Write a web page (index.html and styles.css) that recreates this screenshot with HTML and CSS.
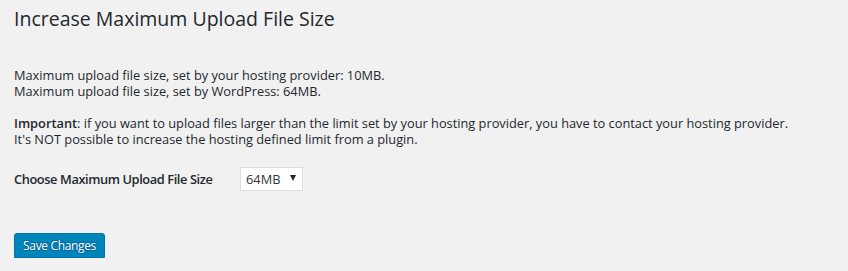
FILE: index.html
```html
<!DOCTYPE html>
<html>
<head>
<meta charset="utf-8">
<link rel="stylesheet" href="styles.css">
</head>
<body>
<div class="wrap">
  <h1 class="title">Increase Maximum Upload File Size</h1>
  <p class="info">Maximum upload file size, set by your hosting provider: 10MB.<br>Maximum upload file size, set by WordPress: 64MB.</p>
  <p class="note"><strong>Important</strong>: if you want to upload files larger than the limit set by your hosting provider, you have to contact your hosting provider.<br>It's NOT possible to increase the hosting defined limit from a plugin.</p>
  <div class="field">
    <label class="field-label">Choose Maximum Upload File Size</label>
    <div class="select"><span class="select-value">64MB</span><span class="select-arrow"></span></div>
  </div>
  <div class="actions">
    <button class="button-primary">Save Changes</button>
  </div>
</div>
</body>
</html>
```

FILE: styles.css
```css
html, body {
  margin: 0;
  padding: 0;
  background: #f1f1f1;
}
body {
  color: #23282d;
  font-family: "Open Sans", sans-serif;
  font-size: 12.8px;
}
.wrap {
  padding: 0 14px;
}
.title {
  margin: 0;
  padding-top: 4px;
  font-size: 19.5px;
  font-weight: 400;
  line-height: 29px;
  color: #23282d;
}
.info {
  margin: 34px 0 0;
  line-height: 16px;
}
.note {
  margin: 16px 0 0;
  line-height: 16px;
}
.note strong {
  font-weight: 600;
}
.field {
  margin-top: 20px;
  display: flex;
  align-items: center;
  height: 24px;
}
.field-label {
  width: 226px;
  font-weight: 600;
  line-height: 16px;
  letter-spacing: -0.4px;
}
.select {
  box-sizing: border-box;
  width: 63px;
  height: 24px;
  background: #fff;
  border: 1px solid #ddd;
  display: flex;
  align-items: center;
  justify-content: space-between;
  padding: 0 6px 0 5px;
  color: #32373c;
}
.select-arrow {
  width: 0;
  height: 0;
  border-left: 3.5px solid transparent;
  border-right: 3.5px solid transparent;
  border-top: 6px solid #23282d;
  margin-top: -3px;
}
.actions {
  margin-top: 42px;
}
.button-primary {
  box-sizing: border-box;
  width: 91px;
  height: 25px;
  padding: 0;
  background: #0085ba;
  border: 1px solid #0073aa;
  border-radius: 3px;
  box-shadow: 0 1px 0 #006799;
  color: #fff;
  font-family: "Open Sans", sans-serif;
  font-size: 12px;
  letter-spacing: -0.35px;
  line-height: 23px;
  text-align: center;
  text-shadow: 0 -1px 1px #006799, 1px 0 1px #006799, 0 1px 1px #006799, -1px 0 1px #006799;
}
```
